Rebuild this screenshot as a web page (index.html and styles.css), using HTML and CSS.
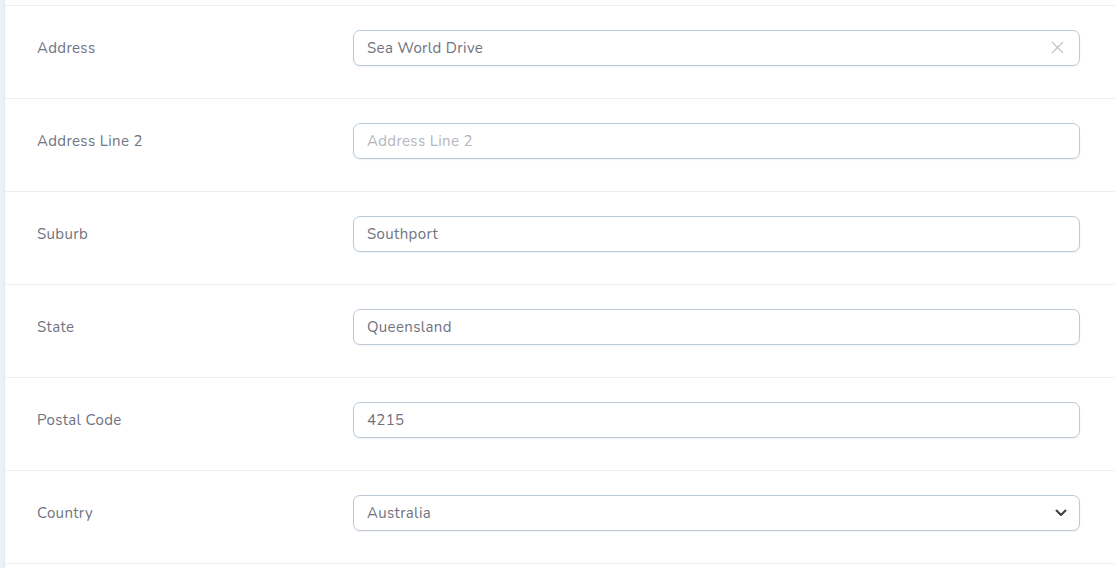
FILE: index.html
```html
<!DOCTYPE html>
<html>
<head>
<meta charset="utf-8">
<link rel="stylesheet" href="styles.css">
</head>
<body>
<div class="page">
  <div class="form">
    <div class="top-spacer"></div>
    <div class="row">
      <label class="label">Address</label>
      <div class="field">
        <input class="input" type="text" value="Sea World Drive">
        <span class="clear">
          <svg width="13" height="13" viewBox="0 0 13 13"><path d="M1 1 L12 12 M12 1 L1 12" stroke="#c4c6cb" stroke-width="1.4" fill="none"/></svg>
        </span>
      </div>
    </div>
    <div class="row">
      <label class="label">Address Line 2</label>
      <div class="field">
        <input class="input" type="text" placeholder="Address Line 2">
      </div>
    </div>
    <div class="row">
      <label class="label">Suburb</label>
      <div class="field">
        <input class="input" type="text" value="Southport">
      </div>
    </div>
    <div class="row">
      <label class="label">State</label>
      <div class="field">
        <input class="input" type="text" value="Queensland">
      </div>
    </div>
    <div class="row">
      <label class="label">Postal Code</label>
      <div class="field">
        <input class="input" type="text" value="4215">
      </div>
    </div>
    <div class="row">
      <label class="label">Country</label>
      <div class="field">
        <div class="input select">
          <span>Australia</span>
          <svg class="chev" width="12" height="8" viewBox="0 0 12 8"><path d="M1.5 1.5 L6 6 L10.5 1.5" stroke="#3d3f45" stroke-width="2" fill="none" stroke-linecap="round" stroke-linejoin="round"/></svg>
        </div>
      </div>
    </div>
    <div class="row last"></div>
  </div>
</div>
</body>
</html>
```

FILE: styles.css
```css
html, body {
  margin: 0;
  padding: 0;
  background: #ffffff;
}
body {
  font-family: "Nunito", "Open Sans", "Noto Sans", sans-serif;
  font-size: 15px;
  letter-spacing: 0.35px;
  color: #6e7382;
}
.page {
  display: flex;
  min-height: 568px;
  border-left: 4px solid #edf1f5;
  box-shadow: inset 1px 0 0 #e3e8ee;
}
.form {
  flex: 1;
  padding-left: 1px;
}
.top-spacer {
  height: 5px;
}
.row {
  display: grid;
  grid-template-columns: 316px 1fr;
  align-items: center;
  padding: 24px 35px 32px 32px;
  border-top: 1px solid #eceef0;
}
.row.last {
  padding: 0;
  height: 10px;
}
.label {
  font-size: 15px;
  color: #6f7382;
}
.field {
  position: relative;
}
.input {
  box-sizing: border-box;
  width: 100%;
  height: 36px;
  border: 1px solid #bccad8;
  border-radius: 7px;
  padding: 0 13px;
  font-family: inherit;
  font-size: 15px;
  letter-spacing: 0.35px;
  color: #6f7280;
  background: #fff;
  outline: none;
  box-shadow: 0 1px 2px rgba(0, 0, 0, 0.06);
  display: block;
}
.input::placeholder {
  color: #b3b6bd;
}
.clear {
  position: absolute;
  right: 16px;
  top: 11px;
  display: flex;
}
.select {
  display: flex;
  align-items: center;
  justify-content: space-between;
  padding-right: 12px;
}
```
